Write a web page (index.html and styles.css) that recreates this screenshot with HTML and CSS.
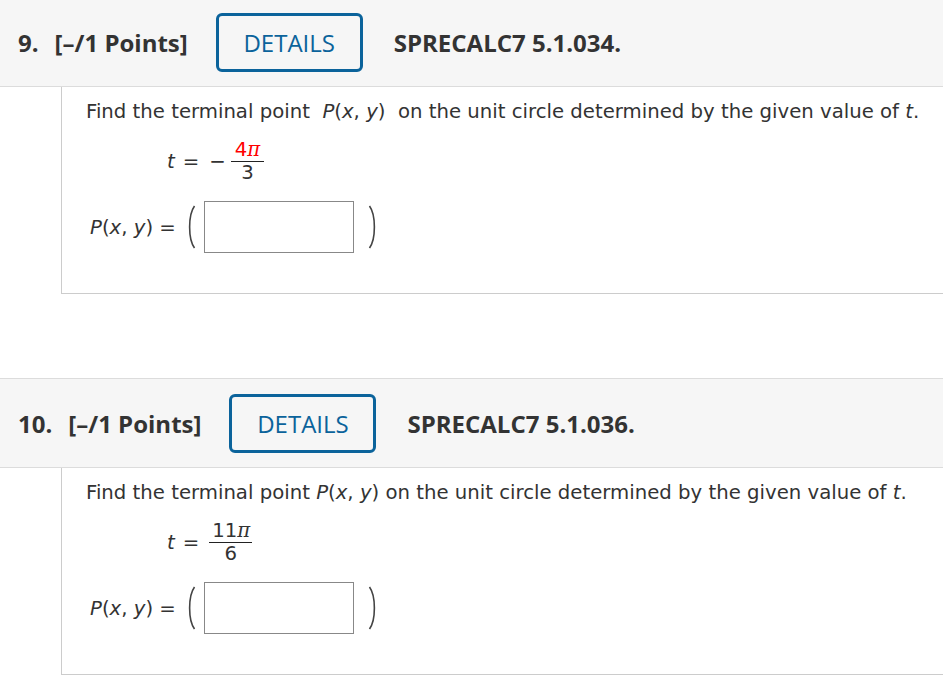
FILE: index.html
```html
<!DOCTYPE html>
<html>
<head>
<meta charset="utf-8">
<link rel="stylesheet" href="styles.css">
</head>
<body>
<div class="page">
  <section class="question">
    <div class="qhead">
      <span class="qnum">9.</span>
      <span class="qpts">[–/1 Points]</span>
      <button class="details">DETAILS</button>
      <span class="qcode">SPRECALC7 5.1.034.</span>
    </div>
    <div class="qbody">
      <p class="prompt">Find the terminal point&nbsp; <i>P</i>(<i>x</i>, <i>y</i>)&nbsp; on the unit circle determined by the given value of <i>t</i>.</p>
      <div class="eq">
        <i class="tvar">t</i><span class="op">=</span><span class="op minus">&minus;</span>
        <span class="frac"><span class="num red">4<span class="pi">π</span></span><span class="den">3</span></span>
      </div>
      <div class="answer">
        <span class="plabel"><i>P</i>(<i>x</i>, <i>y</i>) =</span>
        <svg class="paren" width="10" height="44" viewBox="0 0 10 44"><path d="M8.5 1 C2 10 2 34 8.5 43" fill="none" stroke="#444" stroke-width="1.6"/></svg>
        <span class="box"></span>
        <svg class="paren right" width="10" height="44" viewBox="0 0 10 44"><path d="M1.5 1 C8 10 8 34 1.5 43" fill="none" stroke="#444" stroke-width="1.6"/></svg>
      </div>
    </div>
  </section>

  <section class="question second">
    <div class="qhead">
      <span class="qnum">10.</span>
      <span class="qpts">[–/1 Points]</span>
      <button class="details">DETAILS</button>
      <span class="qcode">SPRECALC7 5.1.036.</span>
    </div>
    <div class="qbody">
      <p class="prompt">Find the terminal point <i>P</i>(<i>x</i>, <i>y</i>) on the unit circle determined by the given value of <i>t</i>.</p>
      <div class="eq">
        <i class="tvar">t</i><span class="op">=</span>
        <span class="frac wide"><span class="num">11<span class="pi">π</span></span><span class="den">6</span></span>
      </div>
      <div class="answer">
        <span class="plabel"><i>P</i>(<i>x</i>, <i>y</i>) =</span>
        <svg class="paren" width="10" height="44" viewBox="0 0 10 44"><path d="M8.5 1 C2 10 2 34 8.5 43" fill="none" stroke="#444" stroke-width="1.6"/></svg>
        <span class="box"></span>
        <svg class="paren right" width="10" height="44" viewBox="0 0 10 44"><path d="M1.5 1 C8 10 8 34 1.5 43" fill="none" stroke="#444" stroke-width="1.6"/></svg>
      </div>
    </div>
  </section>
</div>
</body>
</html>
```

FILE: styles.css
```css
html, body {
  margin: 0;
  padding: 0;
  background: #fff;
  overflow: hidden;
}
.page {
  margin-top: -3px;
}
.question.second {
  margin-top: 84px;
}
.qhead {
  display: flex;
  align-items: center;
  height: 88px;
  background: #f6f6f6;
  border-top: 1px solid #dcdcdc;
  border-bottom: 1px solid #dcdcdc;
  padding-left: 18px;
  font-family: "Open Sans", sans-serif;
  font-weight: 700;
  font-size: 24px;
  color: #333;
}
.qnum {
  margin-right: 16px;
}
.qpts {
  margin-right: 28px;
}
.details {
  box-sizing: border-box;
  width: 147px;
  height: 59px;
  border: 3px solid #0b639b;
  border-radius: 6px;
  background: transparent;
  color: #0b639b;
  font-family: "Open Sans", sans-serif;
  font-weight: 400;
  font-size: 24px;
  padding: 0;
  margin-right: 31px;
}
.qbody {
  margin-left: 61px;
  border-left: 1px solid #cccccc;
  border-bottom: 1px solid #cccccc;
  height: 206px;
  padding-left: 24px;
  font-family: "DejaVu Sans", Verdana, sans-serif;
  font-size: 19.7px;
  color: #333;
}
.prompt {
  margin: 0;
  padding-top: 13px;
  line-height: 24px;
  white-space: nowrap;
}
.eq {
  display: flex;
  align-items: center;
  margin-top: 15px;
  padding-left: 81px;
}
.tvar {
  margin-right: 8px;
}
.op {
  margin-right: 10px;
}
.op.minus {
  margin-left: 0;
  margin-right: 5px;
}
.frac {
  display: inline-flex;
  flex-direction: column;
  align-items: center;
  line-height: 22px;
}
.num {
  padding: 0 4px;
  border-bottom: 1px solid #222;
}
.frac.wide .num {
  padding: 0 2px 0 3px;
}
.red {
  color: #f00;
}
.pi {
  font-family: "DejaVu Serif", serif;
  font-style: italic;
}
.answer {
  display: flex;
  align-items: center;
  margin-top: 17px;
  padding-left: 4px;
}
.plabel {
  margin-right: 10px;
}
.box {
  display: inline-block;
  box-sizing: border-box;
  width: 150px;
  height: 52px;
  border: 1px solid #888;
  background: #fff;
  margin: 0 14px 0 8px;
}
```
